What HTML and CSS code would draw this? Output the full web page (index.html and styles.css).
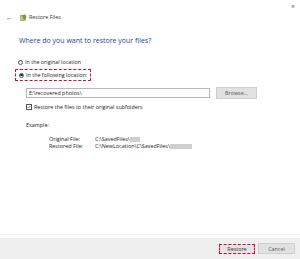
FILE: index.html
```html
<!DOCTYPE html>
<html>
<head>
<meta charset="utf-8">
<link rel="stylesheet" href="styles.css">
</head>
<body>
<div class="window">
  <div class="titlebar">
    <span class="back">&#8592;</span>
    <svg class="appicon" width="7" height="7" viewBox="0 0 7 7">
      <rect x="0.5" y="1.5" width="5" height="5" fill="#d9c27a" stroke="#9a8540" stroke-width="0.5"/>
      <path d="M2 1 L5 0.5 L6.5 3 L4 6.5 Z" fill="#4fa84a"/>
    </svg>
    <span class="title">Restore Files</span>
    <span class="close">&#215;</span>
  </div>
  <div class="content">
    <div class="heading">Where do you want to restore your files?</div>
    <div class="radio-row first">
      <span class="radio"></span>
      <span>In the original location</span>
    </div>
    <div class="radio-row focus">
      <span class="radio checked"></span>
      <span>In the following location:</span>
    </div>
    <div class="path-row">
      <div class="input">E:\recovered photos\</div>
      <div class="btn browse">Browse...</div>
    </div>
    <div class="check-row">
      <span class="check">
        <svg width="6" height="6" viewBox="0 0 6 6"><path d="M1 3.1 L2.4 4.5 L5 1.5" fill="none" stroke="#222" stroke-width="0.9"/></svg>
      </span>
      <span>Restore the files to their original subfolders</span>
    </div>
    <div class="example">Example:</div>
    <div class="ex-grid">
      <span>Original File:</span>
      <span class="val">C:\SavedFiles\<span class="blur b1"></span></span>
      <span>Restored File:</span>
      <span class="val">C:\NewLocation\C\SavedFiles\<span class="blur b2"></span></span>
    </div>
  </div>
  <div class="sep"></div>
  <div class="footer">
    <div class="btn primary">Restore</div>
    <div class="btn cancel">Cancel</div>
  </div>
</div>
</body>
</html>
```
FILE: styles.css
```css
* { box-sizing: border-box; }
html, body { margin: 0; padding: 0; }
body {
  width: 300px;
  height: 259px;
  background: #fff;
  font-family: "Open Sans", "Noto Sans", sans-serif;
  font-size: 5.4px;
  color: #222;
  overflow: hidden;
}
.window {
  height: 259px;
  display: flex;
  flex-direction: column;
}
.titlebar {
  display: flex;
  align-items: center;
  height: 34px;
  padding: 0 0 0 6px;
  position: relative;
}
.back { font-size: 7px; color: #444; width: 14px; }
.appicon { margin-right: 2px; }
.title { font-size: 5.4px; color: #333; }
.close {
  position: absolute;
  right: 5px;
  top: 2px;
  font-size: 7px;
  color: #555;
}
.content {
  flex: 1;
  padding-left: 19px;
}
.heading {
  color: #2b4590;
  font-size: 7px;
  margin-top: 2px;
  height: 20px;
}
.radio-row {
  display: flex;
  align-items: center;
  gap: 2px;
  height: 8px;
}
.radio-row.first { margin-top: 2px; margin-left: -1px; }
.radio {
  width: 5px; height: 5px;
  border: 0.6px solid #555;
  border-radius: 50%;
  display: inline-flex;
  align-items: center;
  justify-content: center;
}
.radio.checked::after {
  content: "";
  width: 2.6px; height: 2.6px;
  background: #222;
  border-radius: 50%;
}
.radio-row.focus {
  margin-top: 3px;
  margin-left: -4px;
  width: 76px;
  height: 12px;
  padding-left: 3px;
  border: 1.5px dashed #c8102e;
  border-radius: 1px;
}
.path-row {
  display: flex;
  align-items: center;
  margin-top: 6px;
  margin-left: 7px;
  gap: 6px;
}
.input {
  width: 184px;
  height: 10px;
  border: 0.8px solid #b8b8b8;
  padding-left: 2px;
  line-height: 9px;
}
.btn {
  display: flex;
  align-items: center;
  justify-content: center;
  background: #e1e1e1;
  border: 0.8px solid #cfcfcf;
  color: #555;
}
.browse { width: 41px; height: 12px; }
.check-row {
  display: flex;
  align-items: center;
  gap: 2px;
  margin-top: 4px;
  margin-left: 7px;
}
.check {
  width: 6px; height: 6px;
  border: 0.7px solid #555;
  display: inline-flex;
  align-items: center;
  justify-content: center;
}
.check svg { display: block; }
.example {
  margin-top: 10px;
  margin-left: 7px;
}
.ex-grid {
  display: grid;
  grid-template-columns: 46px auto;
  margin-top: 7px;
  margin-left: 30px;
  line-height: 7px;
}
.val { display: inline-flex; align-items: center; }
.blur { display: inline-block; height: 5px; background: #cfcfcf; }
.b1 { width: 10px; }
.b2 { width: 22px; }
.sep {
  height: 4px;
  border-top: 1px solid #f0f0f0;
}
.footer {
  height: 21px;
  background: #efefef;
  display: flex;
  align-items: center;
  justify-content: flex-end;
  gap: 3px;
  padding-right: 5px;
}
.primary {
  width: 36px; height: 10px;
  border: 1.5px dashed #c8102e;
  color: #333;
  background: #e4e4e4;
}
.cancel { width: 37px; height: 11px; }
```
